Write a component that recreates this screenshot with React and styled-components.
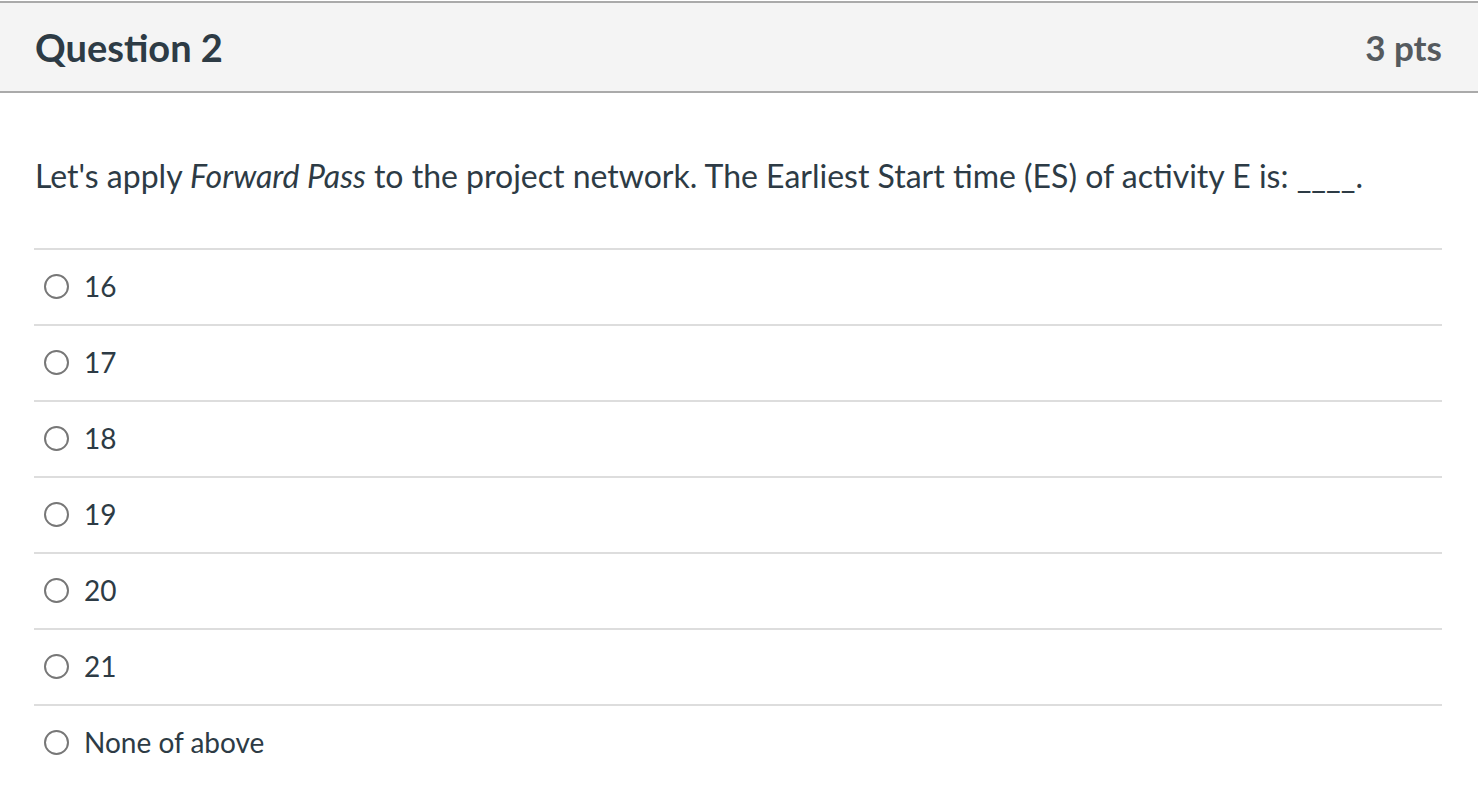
import React from 'react';
import styled, { createGlobalStyle } from 'styled-components';

const GlobalStyle = createGlobalStyle`
  body {
    margin: 0;
    background: #fff;
    font-family: Lato, "Liberation Sans", sans-serif;
    color: #2d3b45;
  }
`;

const QuestionBox = styled.div`
  margin-top: 1px;
`;

const Header = styled.div`
  display: flex;
  align-items: center;
  justify-content: space-between;
  height: 88px;
  padding: 0 36px 0 35px;
  background: #f4f4f4;
  border-top: 2px solid #aaaaaa;
  border-bottom: 2px solid #aaaaaa;
`;

const Title = styled.h2`
  margin: 0;
  font-size: 38px;
  font-weight: 700;
  color: #2d3b45;
`;

const Points = styled.span`
  font-size: 35px;
  font-weight: 700;
  color: #555a5e;
`;

const Body = styled.div`
  padding: 0 36px 0 34px;
`;

const Prompt = styled.p`
  margin: 0;
  padding: 64px 0 0 1px;
  height: 91px;
  font-size: 32px;
  line-height: 38px;
`;

const Answers = styled.div`
  display: flex;
  flex-direction: column;
`;

const Answer = styled.label`
  display: flex;
  align-items: center;
  height: 72px;
  padding-bottom: 2px;
  border-top: 2px solid #dddddd;
  font-size: 28px;
  cursor: pointer;
`;

const Radio = styled.span`
  box-sizing: border-box;
  width: 25px;
  height: 25px;
  margin: 0 15px 0 10px;
  border: 2px solid #777777;
  border-radius: 50%;
  background: #fff;
`;

const options = ['16', '17', '18', '19', '20', '21', 'None of above'];

export default function App() {
  return (
    <>
      <GlobalStyle />
      <QuestionBox>
        <Header>
          <Title>Question 2</Title>
          <Points>3 pts</Points>
        </Header>
        <Body>
          <Prompt>
            Let's apply <em>Forward Pass</em> to the project network. The Earliest Start time (ES) of activity E is: ____.
          </Prompt>
          <Answers>
            {options.map(opt => (
              <Answer key={opt}>
                <Radio />
                {opt}
              </Answer>
            ))}
          </Answers>
        </Body>
      </QuestionBox>
    </>
  );
}
